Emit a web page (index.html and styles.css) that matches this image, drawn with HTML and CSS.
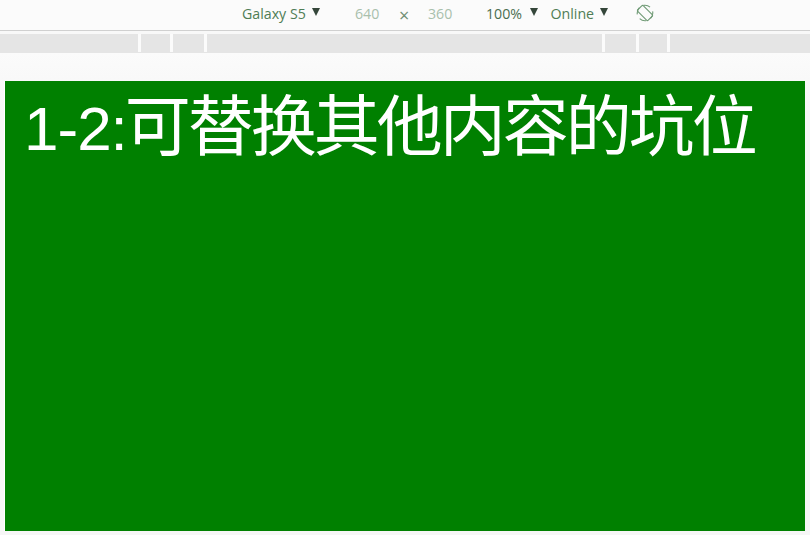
FILE: index.html
```html
<!DOCTYPE html>
<html lang="zh">
<head>
<meta charset="utf-8">
<title>Device preview</title>
<link rel="stylesheet" href="styles.css">
</head>
<body>
<header class="toolbar">
  <span class="item device">Galaxy S5</span><span class="arrow arrow-device"></span>
  <span class="item dim w">640</span>
  <span class="times">×</span>
  <span class="item dim h">360</span>
  <span class="item zoom">100%</span><span class="arrow arrow-zoom"></span>
  <span class="item online">Online</span><span class="arrow arrow-online"></span>
  <svg class="rotate" width="18" height="18" viewBox="0 0 18 18" fill="none" stroke="#6f9a75" stroke-width="1.1">
    <circle cx="9" cy="9" r="7.8" stroke-dasharray="7 5" stroke-dashoffset="1"/>
    <rect x="5" y="1.6" width="8" height="14.8" rx="1.2" transform="rotate(-45 9 9)"/>
  </svg>
</header>
<div class="ruler">
  <div class="seg s1"></div>
  <div class="seg s2"></div>
  <div class="seg s3"></div>
  <div class="seg s4"></div>
  <div class="seg s5"></div>
  <div class="seg s6"></div>
  <div class="seg s7"></div>
</div>
<main class="viewport">
  <div class="slot"><span class="latin">1-2:</span><span class="cjk">可替换其他内容的坑位</span></div>
</main>
</body>
</html>
```

FILE: styles.css
```css
* { box-sizing: border-box; }
html, body { margin: 0; height: 100%; }
body {
  width: 810px;
  height: 535px;
  overflow: hidden;
  background: #f8f8f8;
  font-family: "Open Sans", "Noto Sans", sans-serif;
}
.toolbar {
  height: 31px;
  display: flex;
  align-items: center;
  background: #fbfbfb;
  border-bottom: 1px solid #d0d0d0;
  padding-left: 242px;
  padding-bottom: 3px;
  font-size: 14.2px;
  color: #4f7d55;
  white-space: nowrap;
}
.item { display: block; }
.device { width: 70px; }
.arrow {
  width: 0;
  height: 0;
  border-left: 4.5px solid transparent;
  border-right: 4.5px solid transparent;
  border-top: 8px solid #35463a;
  margin-top: -4px;
}
.dim { color: #a9c0ac; }
.w { margin-left: 34px; width: 44px; padding-left: 1px; }
.times { width: 29px; color: #6f8f74; font-size: 18px; margin-top: 3px; padding-left: 1px; }
.h { width: 59px; padding-left: 1px; }
.zoom { width: 43px; color: #4a6d50; }
.arrow-zoom { margin-left: 0.5px; margin-right: 13px; }
.online { width: 49px; }
.rotate { margin-left: 28px; margin-top: -2px; }
.ruler {
  display: flex;
  gap: 3px;
  height: 19px;
  margin-top: 3px;
  background: #fbfbfb;
  border-bottom: 1px solid #e5e5e5;
}
.seg { background: #e5e5e5; height: 18px; }
.s1 { width: 138px; }
.s2 { width: 29px; }
.s3 { width: 31px; }
.s4 { width: 395px; }
.s5 { width: 31px; }
.s6 { width: 28px; }
.s7 { flex: 1; }
.viewport {
  height: 482px;
  padding: 28px 5px 4px;
  background: linear-gradient(#fbfbfb, #f6f6f6 60px);
}
.slot {
  height: 450px;
  background: #008000;
  color: #fff;
  padding: 0 19px;
  font-family: "Liberation Sans", "Noto Sans CJK SC", sans-serif;
  font-size: 62px;
  line-height: 92px;
  white-space: nowrap;
  box-shadow: -1px 0 0 #fff;
}
.latin { margin-right: -2px; letter-spacing: -1px; }
.cjk { font-size: 66px; letter-spacing: -3px; }
```
